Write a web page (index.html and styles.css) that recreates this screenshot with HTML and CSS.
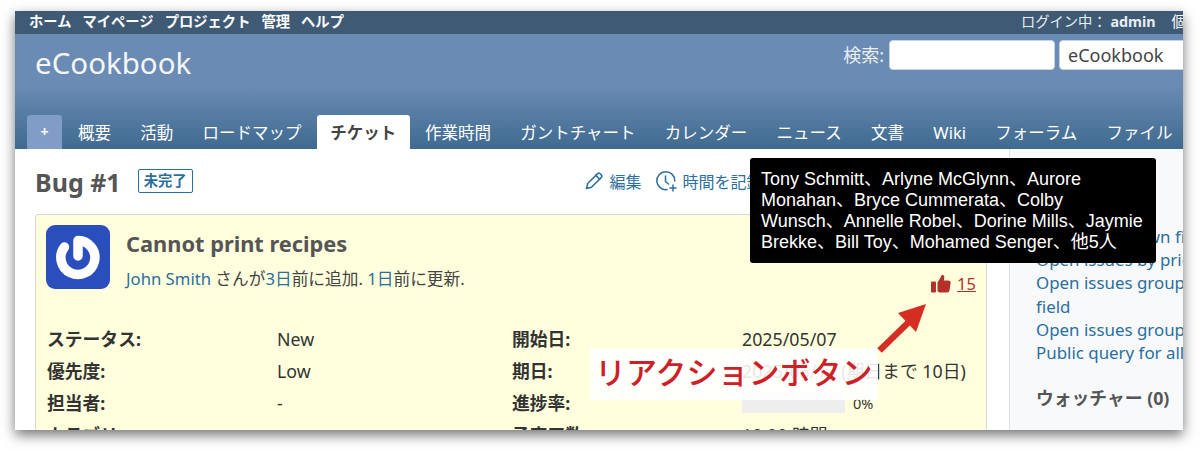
FILE: index.html
```html
<!DOCTYPE html>
<html lang="ja">
<head>
  <meta charset="UTF-8">
  <title>Bug #1 - eCookbook</title>
  <link rel="stylesheet" href="styles.css">
</head>
<body>
  <div class="window">
    <!-- 上部メニュー -->
    <div class="top-menu">
      <div class="top-links">
        <a>ホーム</a><a>マイページ</a><a>プロジェクト</a><a>管理</a><a>ヘルプ</a>
      </div>
      <div class="account">
        <span>ログイン中： <b>admin</b></span><a>個人設定</a><a>ログアウト</a>
      </div>
    </div>

    <!-- ヘッダー -->
    <div class="header">
      <div class="header-row">
        <h1>eCookbook</h1>
        <div class="search">
          <label for="q">検索:</label>
          <input type="text" id="q">
          <div class="jump">eCookbook</div>
        </div>
      </div>
      <div class="tabs">
        <a class="tab-new">+</a>
        <a>概要</a><a>活動</a><a>ロードマップ</a>
        <a class="selected">チケット</a>
        <a>作業時間</a><a>ガントチャート</a><a>カレンダー</a><a>ニュース</a><a>文書</a><a>Wiki</a><a>フォーラム</a><a>ファイル</a><a>設定</a>
      </div>
    </div>

    <div class="main">
      <div class="content">
        <div class="title-row">
          <h2>Bug #1</h2>
          <span class="badge">未完了</span>
          <div class="actions">
            <a>
              <svg width="20" height="20" viewBox="0 0 20 20" fill="none" stroke="#2a6f9e" stroke-width="1.5" stroke-linejoin="round" stroke-linecap="round"><path d="M2.5 17.5l1.2-5L13.6 2.6a1.6 1.6 0 0 1 2.3 0l1.5 1.5a1.6 1.6 0 0 1 0 2.3L7.5 16.3z"/><path d="M11.8 4.4l3.8 3.8"/></svg>
              編集
            </a>
            <a>
              <svg width="22" height="22" viewBox="0 0 22 22" fill="none" stroke="#2a6f9e" stroke-width="1.5" stroke-linecap="round" stroke-linejoin="round"><path d="M12 19.6A9 9 0 1 1 19.8 11"/><path d="M10.5 6v5.5l3 2.5"/><path d="M18 15v6M15 18h6"/></svg>
              時間を記録
            </a>
            <a>ウォッチ</a>
          </div>
        </div>

        <div class="issue">
          <div class="issue-head">
            <svg class="avatar" width="64" height="64" viewBox="0 0 64 64"><rect width="64" height="64" rx="9" fill="#2a4fbd"/><path d="M32 31V15.5A17 17 0 1 1 18.5 22" fill="none" stroke="#fff" stroke-width="9.5" stroke-linecap="round" stroke-linejoin="round"/></svg>
            <div class="subject">
              <h3>Cannot print recipes</h3>
              <p><a>John Smith</a> さんが<a>3日</a>前に追加. <a>1日</a>前に更新.</p>
            </div>
          </div>
          <div class="reaction">
            <svg width="20" height="18" viewBox="0 0 20 18" fill="#b5302b"><rect x="0" y="6.5" width="5" height="11" rx="1"/><path d="M6.5 7.5l3.2-5.2c.3-1 .6-2 1.6-2.2 1.4-.2 2.2 1 2 2.4l-.5 3h4.4c1.6 0 2.6 1 2.4 2.5l-1 7c-.2 1.4-1 2.4-2.6 2.4H9c-1.4 0-2.5-.8-2.5-2.2z"/></svg>
            <a>15</a>
          </div>
          <div class="attributes">
            <div class="attr"><b>ステータス:</b><span>New</span></div>
            <div class="attr"><b>開始日:</b><span>2025/05/07</span></div>
            <div class="attr"><b>優先度:</b><span>Low</span></div>
            <div class="attr"><b>期日:</b><span>2025/05/17 (期日まで 10日)</span></div>
            <div class="attr"><b>担当者:</b><span>-</span></div>
            <div class="attr"><b>進捗率:</b><span class="progress"><i class="bar"></i>0%</span></div>
            <div class="attr"><b>カテゴリー:</b><span>-</span></div>
            <div class="attr"><b>予定工数:</b><span>10:00 時間</span></div>
          </div>
        </div>
      </div>

      <div class="sidebar">
        <ul>
          <li><a>Open issues own field</a></li>
          <li><a>Open issues by priority and tracker</a></li>
          <li><a>Open issues grouped by list custom field</a></li>
          <li><a>Open issues grouped by tracker</a></li>
          <li><a>Public query for all projects</a></li>
        </ul>
        <h4>ウォッチャー (0)</h4>
      </div>
    </div>

    <!-- 注釈 -->
    <div class="tooltip">Tony Schmitt、Arlyne McGlynn、Aurore Monahan、Bryce Cummerata、Colby Wunsch、Annelle Robel、Dorine Mills、Jaymie Brekke、Bill Toy、Mohamed Senger、他5人</div>
    <div class="callout">リアクションボタン</div>
    <svg class="arrow" width="60" height="60" viewBox="0 0 60 60"><path d="M3.5 47.5L37 15" stroke="#d62d23" stroke-width="6.5"/><path d="M50 1L22 10 40 29z" fill="#d62d23"/></svg>
  </div>
</body>
</html>
```

FILE: styles.css
```css
html, body {
  margin: 0;
  padding: 0;
  background: #fff;
  height: 451px;
  overflow: hidden;
}

.window {
  position: relative;
  width: 1168px;
  height: 419px;
  margin: 11px 0 0 15px;
  overflow: hidden;
  background: #fff;
  box-shadow: 0 5px 12px rgba(0, 0, 0, 0.55);
  font-family: "Noto Sans", "Noto Sans CJK JP", sans-serif;
  font-size: 17.8px;
  color: #333;
}

a {
  color: #2a6f9e;
  text-decoration: none;
}

/* 上部メニュー */
.top-menu {
  display: flex;
  height: 23px;
  line-height: 22px;
  padding-left: 14px;
  background: #3f5a75;
  font-size: 14.3px;
  white-space: nowrap;
  color: #e8edf2;
}

.top-links {
  display: flex;
  gap: 11px;
}

.top-links a {
  color: #fff;
  font-weight: bold;
}

.account {
  display: flex;
  gap: 16px;
  margin-left: 677px;
}

.account a {
  color: #fff;
}

/* ヘッダー */
.header {
  display: flex;
  flex-direction: column;
  justify-content: space-between;
  height: 115px;
  background: linear-gradient(#6a8bb3 0, #6a8bb3 45%, #3f6a90 100%);
}

.header-row {
  display: flex;
  justify-content: space-between;
  min-width: 0;
}

.header h1 {
  margin: 10px 0 0 20px;
  font-size: 29.5px;
  line-height: 38px;
  font-weight: normal;
  color: #f4f6f9;
}

.search {
  display: flex;
  align-items: center;
  gap: 5px;
  height: 30px;
  margin: 6px -90px 0 0;
  color: #e9eef4;
  font-size: 18px;
}

.search label {
  margin-bottom: 2px;
}

.search input {
  width: 166px;
  height: 30px;
  box-sizing: border-box;
  border: 1px solid #c8d3e0;
  border-radius: 4px;
  background: #fff;
}

.jump {
  width: 214px;
  height: 30px;
  box-sizing: border-box;
  margin-left: -1px;
  padding-left: 8px;
  line-height: 28px;
  border: 1px solid #c8d3e0;
  border-radius: 4px;
  background: #fff;
  color: #444;
  font-size: 18px;
}

.tabs {
  display: flex;
  align-items: stretch;
  height: 34px;
  padding-left: 12px;
  font-size: 16.5px;
  white-space: nowrap;
}

.tabs a {
  flex: none;
  padding: 2px 14px 0;
  line-height: 32px;
  margin-right: 1.25px;
  color: #fff;
}

.tabs .tab-new {
  padding: 0;
  width: 35px;
  margin-right: 2px;
  line-height: 34px;
  text-align: center;
  background: #7f9dc6;
  border-radius: 3px 3px 0 0;
  font-weight: bold;
  font-size: 14px;
}

.tabs .selected {
  padding: 2px 13.5px 0;
  background: #fff;
  color: #444;
  font-weight: bold;
  border-radius: 3px 3px 0 0;
}

/* メイン */
.main {
  display: flex;
  height: 281px;
}

.content {
  flex: 0 0 994px;
  box-sizing: border-box;
  padding: 20px;
  background: #fff;
}

.title-row {
  display: flex;
  align-items: center;
  height: 24px;
  margin-bottom: 21px;
}

.title-row h2 {
  margin: 2px 17px 0 0;
  font-size: 25px;
  font-weight: bold;
  color: #555;
}

.badge {
  box-sizing: border-box;
  height: 24px;
  padding: 0 5px;
  line-height: 21px;
  border: 1px solid #2a6f9e;
  border-radius: 2px;
  font-size: 14.3px;
  font-weight: bold;
  color: #2a6f9e;
}

.actions {
  display: flex;
  gap: 13px;
  margin-left: 391px;
  font-size: 16px;
  white-space: nowrap;
}

.actions a {
  display: flex;
  align-items: center;
  gap: 6px;
}

/* チケット */
.issue {
  position: relative;
  box-sizing: border-box;
  width: 952px;
  height: 300px;
  padding: 10px 10px;
  background: #ffffdd;
  border: 1px solid #d7d7d7;
  border-radius: 3px;
}

.issue-head {
  display: flex;
  gap: 16px;
}

.avatar {
  flex: none;
}

.subject h3 {
  margin: 3px 0 0;
  font-size: 21.8px;
  line-height: 32px;
  font-weight: bold;
  color: #555;
}

.subject p {
  margin: 8px 0 0;
  font-size: 16.7px;
  line-height: 22px;
  color: #444;
}

.reaction {
  position: absolute;
  top: 59px;
  right: 10px;
  display: flex;
  align-items: center;
  gap: 6px;
}

.reaction a {
  color: #b5302b;
  text-decoration: underline;
  font-size: 16.5px;
  line-height: 20px;
}

.attributes {
  display: grid;
  grid-template-columns: 465px 1fr;
  margin-top: 33px;
  padding-left: 1px;
}

.attr {
  display: flex;
  height: 32px;
  line-height: 32px;
  color: #333;
  white-space: nowrap;
}

.attr b {
  flex: 0 0 230px;
}

.progress {
  display: flex;
  align-items: center;
  gap: 8px;
  font-size: 14.5px;
}

.bar {
  width: 103px;
  height: 20px;
  background: #eeeeee;
}

/* サイドバー */
.sidebar {
  flex: 0 0 350px;
  padding: 76px 0 0 26px;
  background: #f8f9fb;
  border-left: 1px solid #dfe3e8;
  color: #555;
}

.sidebar ul {
  margin: 0;
  padding: 0;
  list-style: none;
  width: 310px;
  font-size: 16.9px;
}

.sidebar li {
  line-height: 23.2px;
}

.sidebar h4 {
  margin: 20px 0 0;
  font-size: 17.8px;
  font-weight: bold;
  color: #555;
}

/* 注釈 */
.tooltip {
  position: absolute;
  left: 735px;
  top: 147px;
  box-sizing: border-box;
  width: 406px;
  height: 105px;
  padding: 11px;
  background: #000;
  border-radius: 3px;
  color: #fff;
  font-family: "Liberation Sans", "Noto Sans CJK JP", sans-serif;
  font-size: 18px;
  line-height: 21px;
}

.callout {
  position: absolute;
  left: 575px;
  top: 337px;
  box-sizing: border-box;
  width: 288px;
  height: 52px;
  padding-left: 5px;
  line-height: 48px;
  background: rgba(255, 255, 255, 0.88);
  color: #cf2027;
  font-size: 31px;
  font-weight: 500;
  white-space: nowrap;
}

.arrow {
  position: absolute;
  left: 861px;
  top: 292px;
}
```
